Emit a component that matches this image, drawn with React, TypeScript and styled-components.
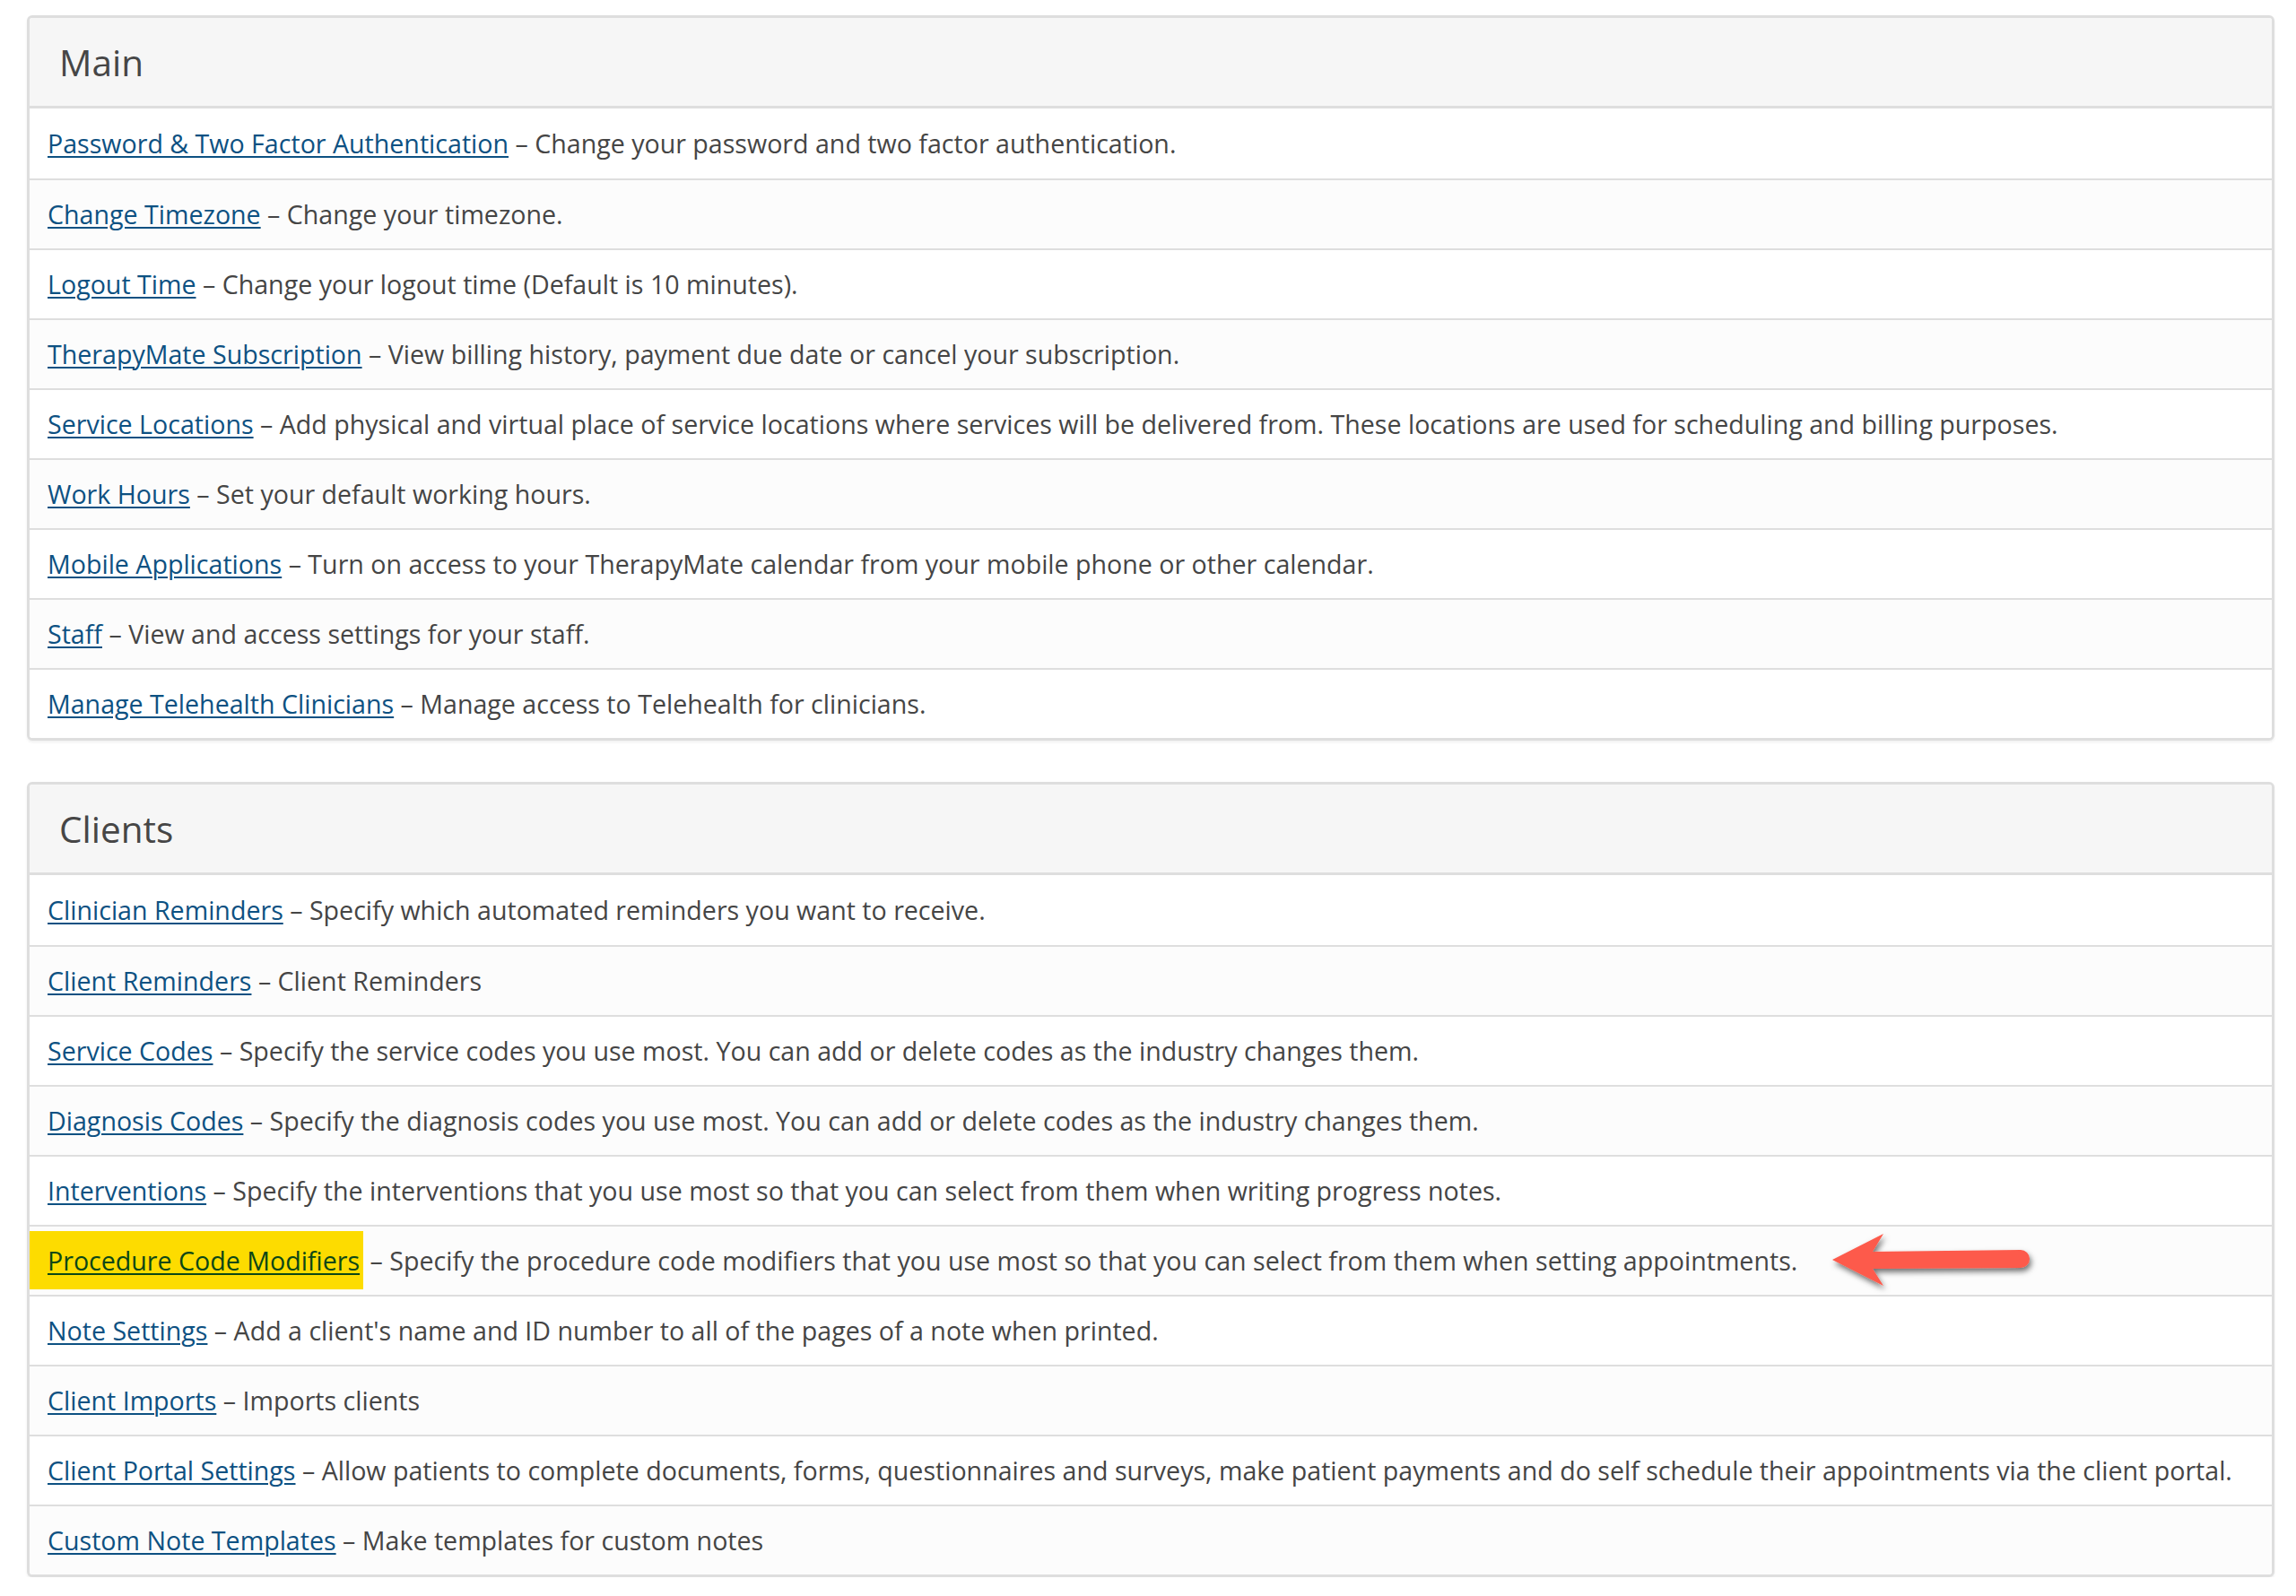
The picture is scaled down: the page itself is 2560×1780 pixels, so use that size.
import * as React from 'react';
import styled, { createGlobalStyle } from 'styled-components';

type Setting = {
  title: string;
  text: string;
  marked?: boolean;
};

const mainSettings: Setting[] = [
  { title: 'Password & Two Factor Authentication', text: 'Change your password and two factor authentication.' },
  { title: 'Change Timezone', text: 'Change your timezone.' },
  { title: 'Logout Time', text: 'Change your logout time (Default is 10 minutes).' },
  { title: 'TherapyMate Subscription', text: 'View billing history, payment due date or cancel your subscription.' },
  {
    title: 'Service Locations',
    text: 'Add physical and virtual place of service locations where services will be delivered from. These locations are used for scheduling and billing purposes.',
  },
  { title: 'Work Hours', text: 'Set your default working hours.' },
  {
    title: 'Mobile Applications',
    text: 'Turn on access to your TherapyMate calendar from your mobile phone or other calendar.',
  },
  { title: 'Staff', text: 'View and access settings for your staff.' },
  { title: 'Manage Telehealth Clinicians', text: 'Manage access to Telehealth for clinicians.' },
];

const clientSettings: Setting[] = [
  { title: 'Clinician Reminders', text: 'Specify which automated reminders you want to receive.' },
  { title: 'Client Reminders', text: 'Client Reminders' },
  {
    title: 'Service Codes',
    text: 'Specify the service codes you use most. You can add or delete codes as the industry changes them.',
  },
  {
    title: 'Diagnosis Codes',
    text: 'Specify the diagnosis codes you use most. You can add or delete codes as the industry changes them.',
  },
  {
    title: 'Interventions',
    text: 'Specify the interventions that you use most so that you can select from them when writing progress notes.',
  },
  {
    title: 'Procedure Code Modifiers',
    text: 'Specify the procedure code modifiers that you use most so that you can select from them when setting appointments.',
    marked: true,
  },
  { title: 'Note Settings', text: "Add a client's name and ID number to all of the pages of a note when printed." },
  { title: 'Client Imports', text: 'Imports clients' },
  {
    title: 'Client Portal Settings',
    text: 'Allow patients to complete documents, forms, questionnaires and surveys, make patient payments and do self schedule their appointments via the client portal.',
  },
  { title: 'Custom Note Templates', text: 'Make templates for custom notes' },
];

export default function App() {
  return (
    <>
      <GlobalStyle />
      <Page>
        <Panel title="Main" items={mainSettings} />
        <Panel title="Clients" items={clientSettings} />
      </Page>
    </>
  );
}

function Panel({ title, items }: { title: string; items: Setting[] }) {
  return (
    <Card>
      <Heading>{title}</Heading>
      {items.map(item => (
        <Row key={item.title}>
          <Line>
            {item.marked ? (
              <Mark>
                <Link $marked href="#">
                  {item.title}
                </Link>
              </Mark>
            ) : (
              <Link href="#">{item.title}</Link>
            )}
            <Desc> – {item.text}</Desc>
          </Line>
          {item.marked && <Pointer />}
        </Row>
      ))}
    </Card>
  );
}

// red callout arrow pointing back at the marked row
function Pointer() {
  return (
    <ArrowSvg width="250" height="90" viewBox="0 0 250 90">
      <defs>
        <filter id="arrow-shadow" x="-20%" y="-40%" width="140%" height="180%">
          <feDropShadow dx="2" dy="4" stdDeviation="3" floodColor="#000" floodOpacity="0.55" />
        </filter>
      </defs>
      <path
        d="M13 39 L70 10 L58 30 L223 28 A10 10 0 0 1 223 48 L58 49 L70 68 Z"
        fill="#fd5a4b"
        filter="url(#arrow-shadow)"
      />
    </ArrowSvg>
  );
}

const GlobalStyle = createGlobalStyle`
  html, body {
    margin: 0;
    padding: 0;
    background: #fff;
  }
  body {
    font-family: "Open Sans", "Liberation Sans", sans-serif;
    color: #444;
  }
`;

const Page = styled.div`
  display: flex;
  flex-direction: column;
  gap: 46px;
  padding: 17px 24px 0 30px;
`;

const Card = styled.section`
  border: 3px solid #dedede;
  border-radius: 6px;
  background: #fff;
  overflow: hidden;
  box-shadow: 0 2px 3px rgba(0, 0, 0, 0.06);
`;

const Heading = styled.h3`
  margin: 0;
  height: 98px;
  display: flex;
  align-items: center;
  padding: 0 33px;
  background: #f6f6f6;
  border-bottom: 3px solid #dedede;
  font-size: 40.5px;
  font-weight: 400;
  color: #464646;
`;

const Row = styled.div`
  position: relative;
  height: 78px;
  box-sizing: border-box;
  display: flex;
  align-items: center;
  padding: 0 20px 2px;
  border-top: 2px solid #dedede;
  background: #fff;

  &:nth-of-type(even) {
    background: #fcfcfc;
  }

  &:first-of-type {
    border-top: none;
  }
`;

const Line = styled.div`
  font-size: 28.6px;
  white-space: nowrap;
`;

const Link = styled.a<{ $marked?: boolean }>`
  color: ${p => (p.$marked ? '#0c4716' : '#0d5182')};
  text-decoration: underline;
  text-decoration-thickness: 2px;
  text-underline-offset: 3px;
`;

const Mark = styled.span`
  display: inline-block;
  margin-left: -21px;
  padding: 13px 4px 13px 21px;
  background: #fddc00;
`;

const Desc = styled.span`
  color: #454545;
`;

const ArrowSvg = styled.svg`
  position: absolute;
  left: 1997px;
  top: -2px;
  overflow: visible;
`;
